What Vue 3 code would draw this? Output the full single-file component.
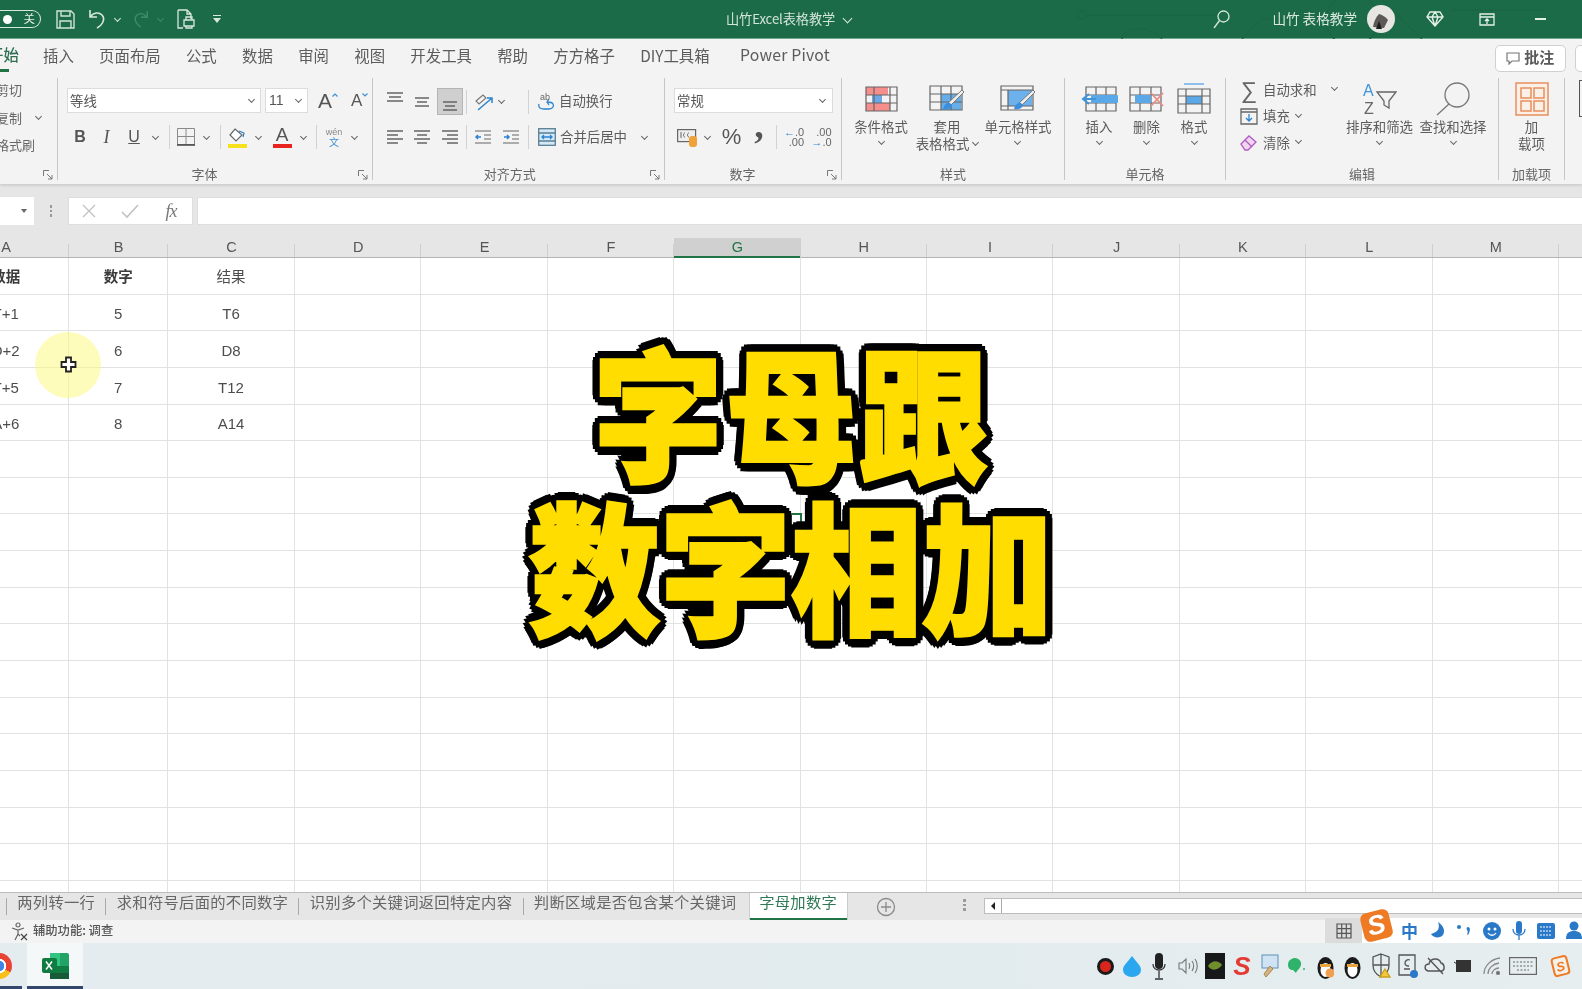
<script setup>
const tabs = ['插入', '页面布局', '公式', '数据', '审阅', '视图', '开发工具', '帮助', '方方格子', 'DIY工具箱']
const colLetters = ['A', 'B', 'C', 'D', 'E', 'F', 'G', 'H', 'I', 'J', 'K', 'L', 'M', 'N']
const data = [
  [['数据', 'b'], ['数字', 'b'], ['结果', 'c']],
  [['T+1', ''], ['5', ''], ['T6', '']],
  [['D+2', ''], ['6', ''], ['D8', '']],
  [['T+5', ''], ['7', ''], ['T12', '']],
  [['A+6', ''], ['8', ''], ['A14', '']]
]
const cells = []
for (let r = 0; r < 18; r++) {
  for (let c = 0; c < 14; c++) {
    const d = data[r] && data[r][c]
    cells.push({ id: r + '-' + c, text: d ? d[0] : '', cls: { bold: d && d[1] === 'b', cjk: d && d[1] === 'c', sel: r === 7 && c === 6 } })
  }
}
const sheets = ['两列转一行', '求和符号后面的不同数字', '识别多个关键词返回特定内容', '判断区域是否包含某个关键词']
const L = {
  top: 'M0 1h16M2 5h12M0 9h16',
  mid: 'M1 6h14M3 10h10M1 14h14',
  bot: 'M1 10h14M3 14h10M1 18h14',
  left: 'M0 1h16M0 5h11M0 9h16M0 13h11',
  center: 'M0 1h16M3 5h10M0 9h16M3 13h10',
  right: 'M0 1h16M5 5h11M0 9h16M5 13h11'
}
</script>

<template>
  <div class="app">
    <header class="title">
      <svg class="circuit" width="560" height="39" viewBox="0 0 560 39" fill="none" stroke="#1a6745" stroke-width="1.5">
        <circle cx="60" cy="15" r="4" /><path d="M64 15h130M100 39c0-12 30-14 40 0M220 39l20-20h60" /><circle cx="330" cy="20" r="26" /><path d="M360 0l40 39M430 10h90" />
      </svg>
      <div class="qat">
        <div class="toggle"><i></i><span>关</span></div>
        <svg width="19" height="19" viewBox="0 0 19 19" fill="none" stroke="#cfe3d8" stroke-width="1.4"><path d="M1 1h14l3 3v14H1zM5 1v5h9V1M4 18v-7h11v7" /></svg>
        <svg width="18" height="20" viewBox="0 0 18 20" fill="none" stroke="#d7e8de" stroke-width="1.6"><path d="M2 1v7h7M2 8c4-5 9-5 12-2s2 9-5 13" /></svg>
        <b class="chev pale"></b>
        <svg width="16" height="18" viewBox="0 0 18 20" fill="none" stroke="#3f8b68" stroke-width="1.6"><path d="M16 1v7H9M16 8C12 3 7 3 4 6s-2 9 5 13" /></svg>
        <b class="chev dim"></b>
        <svg width="18" height="20" viewBox="0 0 18 20" fill="none" stroke="#d7e8de" stroke-width="1.3"><path d="M1 1h9l4 4v5M10 1v4h4M1 1v18h5" /><path d="M7 11h10v6H7zM9 11V8h6v3M9 17v2h6v-2" /></svg>
        <svg class="cust" width="8" height="8" viewBox="0 0 8 8" fill="#d7e8de"><path d="M0 0h8v1H0zM0 3h8L4 8z" /></svg>
      </div>
      <div class="doc">山竹Excel表格教学 <b class="chev pale big"></b></div>
      <div class="win">
        <svg width="17" height="19" viewBox="0 0 17 19" fill="none" stroke="#d7e8de" stroke-width="1.3"><circle cx="10.5" cy="6.5" r="5.5" /><path d="M6.5 10.5L1 18" /></svg>
        <span class="user">山竹 表格教学</span>
        <div class="avatar"><svg width="28" height="28" viewBox="0 0 28 28"><path d="M6 22c1-6 3-10 6-13 3 1 6 2 9 6l-4 8z" fill="#5d5a56" /><path d="M9 24l3-8 3 8z" fill="#1d1d1d" /></svg></div>
        <svg width="18" height="16" viewBox="0 0 18 16" fill="none" stroke="#e4f0e9" stroke-width="1.4"><path d="M4 1h10l3 5-8 9-8-9zM1 6h16M6 6l3 9 3-9M6 6l3-5 3 5" /></svg>
        <svg width="16" height="13" viewBox="0 0 16 13" fill="none" stroke="#e4f0e9" stroke-width="1.3"><path d="M1 1h14v11H1zM1 4h14M8 11V6M6 8l2-2 2 2" /></svg>
        <i class="minimize"></i>
      </div>
    </header>

    <nav class="tabs">
      <span class="tab active">开始</span>
      <span v-for="t in tabs" :key="t" class="tab">{{ t }}</span>
      <span class="tab pivot">Power Pivot</span>
      <button class="comment">
        <svg width="14" height="13" viewBox="0 0 14 13" fill="none" stroke="#777" stroke-width="1.2"><path d="M1 1h12v8H6l-3 3V9H1z" /></svg>
        <span>批注</span>
      </button>
      <button class="share"></button>
    </nav>

    <section class="ribbon">
      <div class="group g-clip">
        <div class="clip-col">
          <div class="clip-row"><span>剪切</span></div>
          <div class="clip-row"><span>复制</span><b class="chev clip-chev"></b></div>
          <div class="clip-row"><span>格式刷</span></div>
        </div>
        <div class="glabel"></div>
        <svg class="launch" width="10" height="10" viewBox="0 0 10 10" fill="none" stroke="#777"><path d="M.5 6V.5H6M4 4l5 5M9 5v4H5" /></svg>
      </div>

      <div class="group g-font">
        <div class="body">
          <div class="r1 font-r1">
            <div class="combo c-font"><span>等线</span><b class="chev"></b></div>
            <div class="combo c-size"><span>11</span><b class="chev"></b></div>
            <span class="grow-a">A<svg width="6" height="4" viewBox="0 0 6 4" fill="none" stroke="#3f8fd2" stroke-width="1.2"><path d="M.5 3.5L3 1l2.5 2.5" /></svg></span>
            <span class="shrink-a">A<svg width="6" height="4" viewBox="0 0 6 4" fill="none" stroke="#3f8fd2" stroke-width="1.2"><path d="M.5.5L3 3 5.500.5" /></svg></span>
          </div>
          <div class="r2 font-r2">
            <span class="fmt b">B</span><span class="fmt i">I</span><span class="fmt u">U</span><b class="chev"></b><i class="vsep"></i>
            <svg width="18" height="18" viewBox="0 0 18 18" fill="none" stroke="#8a8a8a"><path d="M.5.5h17v16H.5zM9 .5v16M.5 8.500h17" /><path d="M0 17h18" stroke="#444" stroke-width="1.5" /></svg>
            <b class="chev"></b><i class="vsep"></i>
            <svg width="20" height="21" viewBox="0 0 20 21"><path d="M7 2l7 6-6 6-6-6z" fill="#fff" stroke="#666" stroke-width="1.2" /><path d="M11 4l5 2-1 4" fill="none" stroke="#2b7cc0" stroke-width="1.2" /><rect y="17" width="19" height="4" fill="#f7e11a" /></svg>
            <b class="chev"></b>
            <span class="fcolor">A<i></i></span>
            <b class="chev"></b><i class="vsep"></i>
            <span class="wen"><em>wén</em><small>文</small></span>
            <b class="chev"></b>
          </div>
        </div>
        <div class="glabel">字体</div>
        <svg class="launch" width="10" height="10" viewBox="0 0 10 10" fill="none" stroke="#777"><path d="M.5 6V.5H6M4 4l5 5M9 5v4H5" /></svg>
      </div>

      <div class="group g-align">
        <div class="body">
          <div class="r1 align-r1">
            <svg width="16" height="20" viewBox="0 0 16 20" fill="none" stroke="#666" stroke-width="1.3"><path :d="L.top" /></svg>
            <svg width="16" height="20" viewBox="0 0 16 20" fill="none" stroke="#666" stroke-width="1.3"><path :d="L.mid" /></svg>
            <span class="on"><svg width="16" height="20" viewBox="0 0 16 20" fill="none" stroke="#666" stroke-width="1.3"><path :d="L.bot" /></svg></span>
            <i class="vsep"></i>
            <svg width="19" height="18" viewBox="0 0 19 18" fill="none" stroke="#777" stroke-width="1.1"><path d="M1 8l7-6 3 3-7 6z" /><path d="M3 17L17 5M12 5h5v5" stroke="#2b84cf" stroke-width="1.5" /></svg>
            <b class="chev"></b><span></span><i class="vsep"></i>
            <div class="inline wrap-btn">
              <svg width="17" height="19" viewBox="0 0 17 19" fill="none" stroke="#2b84cf" stroke-width="1.3"><path d="M1 12c-1 4 2 5 5 5h5c4 0 5-3 4-5s-3-2-6-2M11 7l-2 3 2 3" /><text x="2" y="8" font-size="9" fill="#666" stroke="none" font-family="Liberation Sans">ab</text></svg>
              <span class="lift">自动换行</span>
            </div>
          </div>
          <div class="r2 align-r2">
            <svg width="16" height="14" viewBox="0 0 16 14" fill="none" stroke="#666" stroke-width="1.3"><path :d="L.left" /></svg>
            <svg width="16" height="14" viewBox="0 0 16 14" fill="none" stroke="#666" stroke-width="1.3"><path :d="L.center" /></svg>
            <svg width="16" height="14" viewBox="0 0 16 14" fill="none" stroke="#666" stroke-width="1.3"><path :d="L.right" /></svg>
            <i class="vsep"></i>
            <svg width="16" height="14" viewBox="0 0 16 14" fill="none" stroke="#666" stroke-width="1.2"><path d="M0 1h16M9 5h7M9 9h7M0 13h16" /><path d="M6 7H1M3 5L1 7l2 2" stroke="#2b84cf" stroke-width="1.5" /></svg>
            <svg width="16" height="14" viewBox="0 0 16 14" fill="none" stroke="#666" stroke-width="1.2"><path d="M0 1h16M9 5h7M9 9h7M0 13h16" /><path d="M1 7h5M4 5l2 2-2 2" stroke="#2b84cf" stroke-width="1.5" /></svg>
            <i class="vsep"></i>
            <div class="inline merge-btn">
              <svg width="18" height="18" viewBox="0 0 18 18" fill="#d4e8f8" stroke="#5a7f92" stroke-width="1.3"><rect x=".7" y=".7" width="16.600" height="16.600" /><path d="M.7 5h16.600M.7 13h16.600" fill="none" /><path d="M4 9h10M6 7L4 9l2 2M12 7l2 2-2 2" fill="none" stroke="#2b84cf" /></svg>
              <span class="lift1">合并后居中</span><b class="chev merge-chev"></b>
            </div>
          </div>
        </div>
        <div class="glabel">对齐方式</div>
        <svg class="launch" width="10" height="10" viewBox="0 0 10 10" fill="none" stroke="#777"><path d="M.5 6V.5H6M4 4l5 5M9 5v4H5" /></svg>
      </div>

      <div class="group g-num">
        <div class="body">
          <div class="r1"><div class="combo c-num"><span>常规</span><b class="chev"></b></div></div>
          <div class="r2 num-r2">
            <svg width="20" height="19" viewBox="0 0 20 19"><rect x=".6" y="1.600" width="18" height="12" fill="#eee" stroke="#666" stroke-width="1.2" /><path d="M4 4v6M8 5c-2 0-2 4 0 4M12 5c-2 0-2 4 0 4" fill="none" stroke="#666" /><rect x="12" y="8" width="8" height="11" rx="3" fill="#f0a23a" /></svg>
            <b class="chev"></b>
            <span class="pct">%</span>
            <span class="comma">,</span>
            <i class="vsep"></i>
            <span class="dec"><em><b class="arr">←</b>.0</em><em>.00</em></span>
            <span class="dec"><em>.00</em><em><b class="arr">→</b>.0</em></span>
          </div>
        </div>
        <div class="glabel">数字</div>
        <svg class="launch" width="10" height="10" viewBox="0 0 10 10" fill="none" stroke="#777"><path d="M.5 6V.5H6M4 4l5 5M9 5v4H5" /></svg>
      </div>

      <div class="group g-style">
        <div class="body big-grid">
          <div class="big">
            <div class="big-icon">
              <svg width="33" height="26" viewBox="0 0 33 26"><rect x="1" y="1" width="22" height="8" fill="#f68f8c" /><rect x="7" y="9" width="10" height="8" fill="#6aa9e6" /><rect x="1" y="17" width="24" height="8" fill="#f68f8c" /><path d="M1 1h31v24H1zM1 9h31M1 17h31M9 1v24M25 1v24" fill="none" stroke="#666" stroke-width="1.2" /></svg>
            </div>
            <span>条件格式</span><b class="chev"></b>
          </div>
          <div class="big">
            <div class="big-icon">
              <svg width="36" height="28" viewBox="0 0 36 28"><rect x="12" y="9" width="20" height="16" fill="#65aeea" /><path d="M1 1h32v24H1zM1 9h32M1 17h32M12 1v24M22 1v24" fill="none" stroke="#666" stroke-width="1.2" /><path d="M35 7L22 20l-3-2L33 5z" fill="#eee" stroke="#777" /><path d="M21 18c-3-1-6 2-7 6 4 1 8 0 9-4z" fill="#3b8edc" /></svg>
            </div>
            <span>套用</span><span class="nowrap">表格格式 <b class="chev"></b></span>
          </div>
          <div class="big">
            <div class="big-icon">
              <svg width="36" height="28" viewBox="0 0 36 28"><rect x="8" y="5" width="24" height="16" fill="#6cb0ec" /><path d="M1 1h32v24H1zM1 5h32M8 5v20M1 21h32" fill="none" stroke="#666" stroke-width="1.2" /><path d="M35 7L22 20l-3-2L33 5z" fill="#eee" stroke="#777" /><path d="M21 18c-3-1-6 2-7 6 4 1 8 0 9-4z" fill="#3b8edc" /></svg>
            </div>
            <span class="nowrap">单元格样式</span><b class="chev"></b>
          </div>
        </div>
        <div class="glabel">样式</div>
      </div>

      <div class="group g-cell">
        <div class="body big-row">
          <div class="big cellbtn">
            <div class="big-icon">
              <svg width="37" height="26" viewBox="0 0 37 26"><path d="M5 1h30v24H5zM5 9h30M5 17h30M15 1v24M25 1v24" fill="none" stroke="#666" stroke-width="1.2" /><rect x="10" y="9" width="27" height="8" rx="1" fill="#5aa8e8" /><path d="M15 13H2M8 8l-6 5 6 5" fill="none" stroke="#3f95dc" stroke-width="2" /></svg>
            </div>
            <span>插入</span><b class="chev"></b>
          </div>
          <div class="big cellbtn">
            <div class="big-icon">
              <svg width="36" height="26" viewBox="0 0 36 26"><path d="M1 1h31v24H1zM1 9h31M1 17h31M11 1v24M22 1v24" fill="none" stroke="#666" stroke-width="1.2" /><rect x="6" y="9" width="16" height="8" fill="#5aa8e8" /><path d="M22 7l12 13M34 7L22 20" stroke="#ec8c85" stroke-width="1.8" /></svg>
            </div>
            <span>删除</span><b class="chev"></b>
          </div>
          <div class="big cellbtn">
            <div class="big-icon">
              <svg width="34" height="32" viewBox="0 0 34 32"><path d="M7 1h20" stroke="#6aaee8" stroke-width="1.500" /><rect x="9" y="13" width="16" height="8" fill="#5aa8e8" /><path d="M1 6h32v24H1zM1 13h32M1 21h32M9 6v24M25 6v24" fill="none" stroke="#666" stroke-width="1.2" /></svg>
            </div>
            <span>格式</span><b class="chev"></b>
          </div>
        </div>
        <div class="glabel">单元格</div>
      </div>

      <div class="group g-edit">
        <div class="body edit-row">
          <div class="edit-col">
            <div class="edit-line">
              <span class="sigma">∑</span><span class="t">自动求和</span><b class="chev sum-chev"></b>
            </div>
            <div class="edit-line">
              <svg class="ic" width="18" height="17" viewBox="0 0 18 17" fill="none" stroke="#666" stroke-width="1.300"><path d="M1 1h16v15H1zM1 4h16" /><path d="M9 6v7M6 10l3 3 3-3" stroke="#2b84cf" /></svg>
              <span class="t">填充</span><b class="chev"></b>
            </div>
            <div class="edit-line">
              <svg class="ic" width="18" height="18" viewBox="0 0 18 18" fill="#f0d6f0" stroke="#b05cc0" stroke-width="1.300"><path d="M1 10l8-8 7 6-8 8h-3z" /><path d="M5 6l7 7" fill="none" /></svg>
              <span class="t">清除</span><b class="chev"></b>
            </div>
          </div>
          <div class="big sortbtn">
            <div class="big-icon">
              <svg width="34" height="33" viewBox="0 0 34 33" fill="none"><text x="0" y="14" font-size="16" fill="#3f95dc" font-family="Liberation Sans">A</text><text x="1" y="32" font-size="16" fill="#666" font-family="Liberation Sans">Z</text><path d="M14 10h19l-7 9v7l-5-3v-4z" stroke="#666" stroke-width="1.3" /></svg>
            </div>
            <span class="nowrap">排序和筛选</span><b class="chev"></b>
          </div>
          <div class="big findbtn">
            <div class="big-icon">
              <svg width="34" height="34" viewBox="0 0 34 34" fill="none" stroke="#777" stroke-width="1.3"><circle cx="21" cy="13" r="12" /><path d="M13 22L1 33" /></svg>
            </div>
            <span class="nowrap">查找和选择</span><b class="chev"></b>
          </div>
        </div>
        <div class="glabel">编辑</div>
      </div>

      <div class="group g-add">
        <div class="body addin">
          <div class="big">
            <div class="big-icon">
              <svg width="34" height="34" viewBox="0 0 34 34" fill="#fbf0e8" stroke="#e88f5d" stroke-width="1.500"><rect x="1" y="1" width="32" height="32" /><rect x="6" y="6" width="10" height="10" /><rect x="19" y="6" width="10" height="10" /><rect x="6" y="19" width="10" height="10" /><rect x="19" y="19" width="10" height="10" /></svg>
            </div>
            <span>加</span><span>载项</span>
          </div>
        </div>
        <div class="glabel">加载项</div>
      </div>
      <div class="g-last"><i></i></div>
    </section>

    <section class="formula">
      <div class="namebox"><b class="tri"></b></div>
      <div class="dots"><i></i><i></i><i></i></div>
      <div class="fx-box">
        <svg width="16" height="16" viewBox="0 0 16 16" fill="none" stroke="#c2c2c2" stroke-width="1.300"><path d="M2 2l12 12M14 2L2 14" /></svg>
        <svg width="18" height="16" viewBox="0 0 18 16" fill="none" stroke="#c2c2c2" stroke-width="1.600"><path d="M1 9l5 5L17 2" /></svg>
        <span class="fx">fx</span>
      </div>
      <div class="finput"></div>
    </section>

    <section class="sheet">
      <div class="colhead">
        <div v-for="c in colLetters" :key="c" class="ch" :class="{ cur: c === 'G' }">{{ c }}</div>
      </div>
      <div class="grid">
        <div v-for="cell in cells" :key="cell.id" class="cell" :class="cell.cls">{{ cell.text }}</div>
      </div>
      <div class="pointer">
        <svg width="17" height="17" viewBox="0 0 17 17"><path d="M6 1.500h5v4.500h4.500v5H11v4.500H6V11H1.500V6H6z" fill="#fff" stroke="#222" stroke-width="1.800" /></svg>
      </div>
      <div class="banner">
        <div class="line one">字<span class="upright">母</span>跟</div>
        <div class="line two">数字相加</div>
      </div>
    </section>

    <section class="sheettabs">
      <div class="stab-list">
        <template v-for="s in sheets" :key="s"><i class="ssep"></i><span class="stab">{{ s }}</span></template>
        <span class="stab active">字母加数字</span>
      </div>
      <svg class="addsheet" width="20" height="20" viewBox="0 0 20 20" fill="none" stroke="#8a8a8a" stroke-width="1.300"><circle cx="10" cy="10" r="8.500" /><path d="M10 5v10M5 10h10" /></svg>
      <div class="dots sdots"><i></i><i></i><i></i></div>
      <div class="scroll"><span class="sarrow"><b></b></span><span class="strack"></span></div>
    </section>

    <section class="status">
      <svg class="acc" width="18" height="19" viewBox="0 0 18 19" fill="none" stroke="#666" stroke-width="1.200"><circle cx="7" cy="3" r="2" /><path d="M1 6l6 2 6-2M7 8v4l-3 6M7 12l2 2" /><path d="M10 12l6 6M16 12l-6 6" stroke="#444" /></svg>
      <span class="acc-text">辅助功能: 调查</span>
      <div class="ime">
        <div class="ime-grid"><svg width="16" height="16" viewBox="0 0 16 16" fill="none" stroke="#555" stroke-width="1.200"><path d="M1 1h14v14H1zM1 5.700h14M1 10.300h14M5.700 1v14M10.300 1v14" /></svg></div>
        <div class="ime-bar">
          <span class="zh">中</span>
          <svg width="16" height="17" viewBox="0 0 16 17" fill="#2a78c8"><path d="M9 0c2 5 1 10-7 12 3 5 13 5 13-3 0-4-3-7-6-9z" /></svg>
          <svg width="16" height="14" viewBox="0 0 16 14" fill="#2a78c8"><circle cx="3" cy="3" r="2" /><path d="M12 3c2 0 3 3 0 8l-1-1c1-1 1-3 0-4-1-2 0-3 1-3z" /></svg>
          <svg width="18" height="18" viewBox="0 0 18 18"><circle cx="9" cy="9" r="9" fill="#2a78c8" /><circle cx="6" cy="7" r="1.500" fill="#fff" /><circle cx="12" cy="7" r="1.500" fill="#fff" /><path d="M5 11c2 3 6 3 8 0" stroke="#fff" fill="none" stroke-width="1.300" /></svg>
          <svg width="14" height="20" viewBox="0 0 14 20" fill="#2a78c8"><rect x="4" width="6" height="13" rx="3" /><path d="M1 8c0 8 12 8 12 0M7 14v5" fill="none" stroke="#2a78c8" stroke-width="1.300" /></svg>
          <svg width="18" height="16" viewBox="0 0 18 16"><rect width="18" height="16" rx="2" fill="#2a78c8" /><path d="M3 4h12M3 8h12M3 12h12" stroke="#fff" stroke-dasharray="2 1" /></svg>
          <svg width="18" height="20" viewBox="0 0 18 20" fill="#2a78c8"><circle cx="8" cy="5" r="4.500" /><path d="M0 18c0-6 3-8 8-8s8 2 8 8z" /></svg>
        </div>
        <span class="sogou"><em>S</em></span>
      </div>
    </section>

    <footer class="taskbar">
      <div class="task chrome"><i class="chrome-ic"></i></div>
      <div class="task excel">
        <svg width="27" height="26" viewBox="0 0 27 26"><path d="M8 0h17a2 2 0 0 1 2 2v22a2 2 0 0 1-2 2H8z" fill="#21a366" /><rect x="8" y="0" width="10" height="13" fill="#33c481" /><rect x="8" y="13" width="19" height="7" fill="#107c41" /><rect x="8" y="20" width="19" height="6" fill="#185c37" /><rect y="5" width="15" height="15" rx="2" fill="#107c41" /><path d="M4 8.500l6 8M10 8.500l-6 8" stroke="#fff" stroke-width="1.500" /></svg>
      </div>
      <div class="tray">
        <i class="rec"></i>
        <svg width="20" height="22" viewBox="0 0 20 22"><path d="M10 1c4 6 9 9 9 14a9 7 0 0 1-18 0C1 10 6 7 10 1z" fill="#2aa7ee" /></svg>
        <svg width="14" height="27" viewBox="0 0 14 27" fill="#222"><rect x="3" width="8" height="16" rx="4" /><path d="M1 11c0 8 12 8 12 0M7 18v7M3 26h8" fill="none" stroke="#333" stroke-width="1.300" /></svg>
        <svg width="20" height="20" viewBox="0 0 20 20" fill="none" stroke="#777" stroke-width="1.100"><path d="M1 7h3l4-4v14l-4-4H1zM11 7c1 2 1 4 0 6M14 5c2 3 2 7 0 10M17 3c3 4 3 10 0 14" /></svg>
        <svg width="20" height="26" viewBox="0 0 20 26"><rect width="20" height="26" fill="#16181a" /><path d="M3 13c4-6 10-6 14-1-4 5-10 7-14 1z" fill="#6f8f2d" /></svg>
        <span class="reds">S</span>
        <svg width="18" height="24" viewBox="0 0 18 24" fill="#cfe3f5" stroke="#5f8fb8"><rect x="1" y="1" width="16" height="13" /><path d="M3 20l6-8 3 3-7 8z" fill="#d7b27f" stroke="#a58755" /></svg>
        <svg width="18" height="18" viewBox="0 0 18 18" fill="#2fb36b"><path d="M1 8c0-5 4-7 7-7s7 3 6 7-4 5-5 8l-3-3c-3 0-5-2-5-5z" /><circle cx="17" cy="12" r="1" /></svg>
        <svg class="qq" width="17" height="26" viewBox="0 0 17 26"><ellipse cx="8.500" cy="15" rx="8" ry="11" fill="#1a1a1a" /><ellipse cx="8.500" cy="17" rx="5" ry="7" fill="#fff" /><rect x="3" y="11" width="11" height="3" fill="#e8a33a" /><circle cx="13" cy="20" r="4.500" fill="#f0a050" /></svg>
        <svg class="qq" width="17" height="26" viewBox="0 0 17 26"><ellipse cx="8.500" cy="15" rx="8" ry="11" fill="#1a1a1a" /><ellipse cx="8.500" cy="17" rx="5" ry="7" fill="#fff" /><rect x="3" y="11" width="11" height="3" fill="#e8a33a" /></svg>
        <svg width="20" height="26" viewBox="0 0 20 26" fill="none" stroke="#555" stroke-width="1.300"><path d="M10 1l8 3v8c0 6-4 10-8 12-4-2-8-6-8-12V4zM10 1v23M2 12h16" /><path d="M14 16l5 8h-10z" fill="#f5c93a" stroke="#c9a020" /></svg>
        <svg width="20" height="26" viewBox="0 0 20 26" fill="none" stroke="#555" stroke-width="1.300"><path d="M1 2h16v20H1z" /><path d="M12 7c-3-1-5 1-5 3s2 3 4 3M6 16h6" /><circle cx="16" cy="21" r="4" fill="#2a78c8" stroke="none" /></svg>
        <svg width="22" height="20" viewBox="0 0 22 20" fill="none" stroke="#555" stroke-width="1.400"><path d="M4 15c-4-1-4-7 1-7 1-6 10-7 12-1 4 1 4 7 1 8zM4 2l15 16" /></svg>
        <svg width="18" height="14" viewBox="0 0 18 14"><rect x="2" y="1" width="15" height="12" fill="#333" /><path d="M0 3l3 2v5" stroke="#333" fill="none" /></svg>
        <svg width="18" height="18" viewBox="0 0 18 18" fill="none" stroke="#888" stroke-width="1.300"><path d="M1 17C1 9 8 2 17 1M5 17c0-6 5-10 11-11M9 17c0-3 3-6 7-6" /><circle cx="15" cy="16" r="1.500" fill="#555" /></svg>
        <svg width="28" height="18" viewBox="0 0 28 18" fill="none" stroke="#666" stroke-width="1.200"><rect x=".6" y=".6" width="26.800" height="16.800" /><path d="M4 5h20M4 9h20M8 13h12" stroke-dasharray="2 1.500" /></svg>
        <span class="sogou small"><em>S</em></span>
      </div>
    </footer>
  </div>
</template>

<style>
html, body { margin: 0; padding: 0; background: #fff; }
</style>

<style scoped>
* { box-sizing: border-box; }
.app {
  width: 1582px; height: 989px; overflow: hidden; display: flex; flex-direction: column;
  font-family: "Noto Sans CJK SC", "Liberation Sans", sans-serif; color: #555; background: #fff;
  filter: blur(.55px); position: relative;
}
i, em, b { font-style: normal; font-weight: normal; display: block; }
.chev { width: 5px; height: 5px; border-right: 1.300px solid #666; border-bottom: 1.300px solid #666; transform: rotate(45deg); margin: -2px 0 0; flex: none; }
.chev.pale { border-color: #d7e8de; }
.chev.dim { border-color: #3f8b68; }
.chev.big { width: 7px; height: 7px; margin: -3px 0 0 6px; display: inline-block; vertical-align: middle; }

/* title */
.title { height: 39px; flex: none; background: #1c6b48; border-bottom: 1px solid #6fa78b; display: grid; grid-template-columns: 726px auto 1fr; align-items: center; position: relative; }
.circuit { position: absolute; right: 0; top: 0; }
.qat { display: flex; align-items: center; height: 38px; }
.qat > :nth-child(2) { margin-left: 15px; }
.qat > :nth-child(3) { margin-left: 13px; }
.qat > :nth-child(4) { margin-left: 9px; }
.qat > :nth-child(5) { margin-left: 13px; }
.qat > :nth-child(6) { margin-left: 9px; }
.qat > :nth-child(7) { margin-left: 14px; }
.qat > :nth-child(8) { margin-left: 18px; }
.toggle { width: 41px; height: 18px; border: 1.300px solid #d7e8de; border-left: 0; border-radius: 0 10px 10px 0; display: flex; align-items: center; justify-content: space-between; padding: 0 5px 0 3px; }
.toggle i { width: 9px; height: 9px; border-radius: 50%; background: #fff; }
.toggle span { font-size: 11.500px; color: #e4f0e9; line-height: 1; }
.doc { font-size: 13.2px; color: #d3e4da; letter-spacing: -.1px; white-space: nowrap; margin-top: -2px; }
.win { display: flex; align-items: center; justify-content: flex-end; padding-right: 36px; position: relative; }
.user { font-size: 13.6px; color: #d9e8df; margin-left: 42px; white-space: nowrap; margin-top: -2px; }
.avatar { width: 28px; height: 28px; border-radius: 50%; background: #e8e6e2; margin-left: 10px; overflow: hidden; }
.win > :nth-child(4) { margin-left: 31px; }
.win > :nth-child(5) { margin-left: 35px; }
.minimize { width: 11px; height: 1.500px; background: #e4f0e9; margin-left: 40px; }

/* tabs */
.tabs { height: 39px; flex: none; background: #f3f3f3; display: flex; align-items: center; padding-left: 43px; gap: 25.300px; position: relative; }
.tab { font-size: 15.400px; line-height: 34px; color: #5c5c5c; white-space: nowrap; margin-top: -8px; }
.tab.active { position: absolute; left: -12px; top: 0; height: 33px; margin: 0; line-height: 30px; color: #2f6f50; font-weight: 500; }
.tab.active::after { content: ""; position: absolute; left: 0; right: 10px; bottom: 0; height: 3px; background: #217346; }
.tab.pivot { margin-left: 5px; font-size: 15.800px; letter-spacing: .2px; }
.comment { margin-left: auto; width: 71px; height: 27px; margin-top: 0; background: #fff; border: 1px solid #d0d0d0; border-radius: 5px; display: flex; align-items: center; justify-content: center; gap: 4px; font: 700 15px "Noto Sans CJK SC", sans-serif; color: #5a5a5a; padding: 0; }
.comment span { margin-top: -5px; }
.share { width: 18px; height: 27px; background: #fff; border: 1px solid #d0d0d0; border-radius: 5px; margin-left: -16px; margin-right: -11px; flex: none; }

/* ribbon */
.ribbon { height: 106px; flex: none; background: #f3f3f3; display: flex; align-items: flex-start; overflow: hidden; box-shadow: 0 2px 2px #cfcfcf; position: relative; z-index: 1; font-size: 13.400px; }
.group { height: 102px; flex: none; position: relative; display: flex; flex-direction: column; border-right: 1.500px solid #c6c6c6; }
.body { flex: 1; min-height: 0; padding-top: 10px; }
.glabel { height: 14px; line-height: 14px; font-size: 13px; text-align: center; color: #666; margin-bottom: -1px; white-space: nowrap; }
.launch { position: absolute; right: 4px; bottom: 0; }
.r1 { height: 25px; display: flex; align-items: center; }
.r2 { height: 26px; margin-top: 11px; display: grid; align-items: center; justify-items: center; }
.vsep { width: 1px; height: 24px; background: #d2d2d2; }
.nowrap { white-space: nowrap; display: inline-flex; align-items: center; gap: 4px; }
.inline { display: flex; align-items: center; justify-self: start; white-space: nowrap; font-size: 13.400px; color: #5c5c5c; }
.lift { margin-top: -3px; }
.lift1 { margin-top: -2px; }

.g-clip { width: 58px; }
.clip-col { height: 88px; position: relative; margin-top: -2px; }
.clip-row { height: 27.500px; display: flex; align-items: center; position: relative; font-size: 13px; color: #666; justify-content: flex-end; width: 22px; white-space: nowrap; }
.clip-row:nth-child(3) { width: 35px; }
.clip-chev { position: absolute; left: 36px; }
.g-clip .glabel { margin-top: auto; }

.g-font { width: 315px; padding-left: 9px; }
.g-font .glabel { padding-right: 30px; }
.font-r1 { gap: 4px; }
.combo { height: 25px; background: #fff; border: 1px solid #dcdcdc; display: flex; align-items: center; justify-content: space-between; padding: 0 6px 0 2px; font-size: 13.400px; color: #555; }
.combo span { margin-top: -2px; }
.c-font { width: 194px; }
.c-size { width: 43px; font-family: "Liberation Sans", sans-serif; font-size: 14px; padding-left: 3px; }
.grow-a { margin-left: 6px; font: 21px "Liberation Sans", sans-serif; color: #555; display: flex; align-items: flex-start; line-height: 25px; width: 19px; }
.shrink-a { margin-left: 10px; font: 17px "Liberation Sans", sans-serif; color: #555; display: flex; align-items: flex-start; line-height: 25px; }
.grow-a svg, .shrink-a svg { margin-top: 5px; flex: none; }
.font-r2 { grid-template-columns: 26px 27px 28px 14px 14px 20px 20px 8px 27px 14px 34px 8px 19px 16px 24px; }
.fmt { font: 16px "Liberation Sans", sans-serif; color: #555; }
.fmt.b { font-weight: 700; }
.fmt.i { font-family: "Liberation Serif", serif; font-style: italic; font-size: 18px; }
.fmt.u { text-decoration: underline; }
.fcolor { position: relative; font: 19px/20px "Liberation Sans", sans-serif; width: 19px; height: 22px; text-align: center; color: #555; margin-top: -2px; }
.fcolor i { position: absolute; left: 0; right: 0; bottom: -1px; height: 4px; background: #e8241f; }
.wen { display: flex; flex-direction: column; align-items: center; line-height: 9px; white-space: nowrap; }
.wen em { font: 9px/10px "Liberation Sans", sans-serif; color: #888; }
.wen small { font-size: 10px; line-height: 10px; color: #3f8fd2; }

.g-align { width: 292px; padding-left: 8.500px; }
.g-align .glabel { padding-right: 26px; }
.align-r1 { display: grid; grid-template-columns: 27px 27px 28px 6px 29px 6px 19.500px 9px auto; align-items: center; justify-items: center; }
.on { width: 26px; height: 27px; background: #cfcfcf; border: 1px solid #b4b4b4; display: flex; align-items: center; justify-content: center; }
.align-r2 { grid-template-columns: 27px 27px 28px 6px 27.500px 27px 9px auto; }
.wrap-btn, .merge-btn { padding-left: 5px; gap: 4px; }
.merge-chev { margin-left: 11px; }

.g-num { width: 177px; padding-left: 9px; }
.g-num .glabel { padding-right: 30px; }
.c-num { width: 159px; padding-right: 7px; }
.num-r2 { grid-template-columns: 25px 16px 33px 22px 12px 24px 31px; }
.pct { font: 22px/26px "Liberation Sans", sans-serif; color: #555; }
.comma { font: 700 38px/20px "Liberation Serif", serif; color: #555; margin-top: -24px; }
.dec { display: flex; flex-direction: column; align-items: flex-end; font: 11px/10px "Liberation Sans", sans-serif; color: #666; white-space: nowrap; }
.dec em { display: flex; align-items: center; }
.arr { color: #2b84cf; font-size: 11px; line-height: 10px; }

.big { display: flex; flex-direction: column; align-items: center; font-size: 13.400px; line-height: 17px; color: #5c5c5c; white-space: nowrap; }
.big .chev { margin-top: 4px; }
.big .nowrap .chev { margin-top: -2px; }
.big-icon { height: 33px; margin-bottom: 2.500px; display: flex; align-items: center; justify-content: center; }
.g-style { width: 223px; }
.big-grid { display: grid; grid-template-columns: 78px 54px 88px; justify-items: center; padding-top: 4px; }
.g-cell { width: 161px; }
.big-row { display: flex; gap: 11.500px; padding: 4px 0 0 16px; }
.cellbtn { width: 36px; }
.g-edit { width: 273px; }
.edit-row { display: flex; padding: 0 0 0 14px; }
.edit-col { width: 105px; margin-top: -2.500px; }
.edit-line { height: 26.500px; display: flex; align-items: center; position: relative; font-size: 13.400px; color: #5c5c5c; }
.edit-line .t { margin-left: 5px; }
.edit-line .chev { margin-left: 6px; }
.edit-line svg, .sigma { margin-top: 2px; }
.sigma { width: 18px; text-align: center; font: 23px/26px "Liberation Sans", sans-serif; color: #666; }
.sum-chev { margin-left: 15px !important; }
.sortbtn { width: 69px; padding-top: 4px; }
.findbtn { width: 68px; margin-left: 5px; padding-top: 4px; }
.g-add { width: 66px; }
.addin { display: flex; justify-content: center; padding-top: 4px; }
.g-last { padding: 2px 0 0 14px; }
.g-last i { width: 30px; height: 37px; border: 1.500px solid #555; }

/* formula */
.formula { height: 54px; flex: none; background: #e6e6e6; display: flex; padding-top: 13px; align-items: flex-start; }
.namebox { width: 34px; height: 28px; background: #fff; display: flex; align-items: center; justify-content: flex-end; padding-right: 7px; }
.tri { width: 0; height: 0; border-left: 3.500px solid transparent; border-right: 3.500px solid transparent; border-top: 4px solid #666; }
.dots { width: 34px; height: 28px; display: flex; flex-direction: column; align-items: center; justify-content: center; gap: 2px; }
.dots i { width: 2.500px; height: 2.500px; background: #9a9a9a; }
.fx-box { width: 125px; height: 28px; background: #fff; border: 1px solid #dedede; display: grid; grid-template-columns: 40px 42px 40px; align-items: center; justify-items: center; }
.fx { font: italic 18px "Liberation Serif", serif; color: #777; letter-spacing: -1px; }
.finput { flex: 1; height: 28px; margin-left: 4px; background: #fff; border: 1px solid #dedede; border-right: 0; }

/* sheet */
.sheet { height: 654px; flex: none; position: relative; overflow: hidden; }
.colhead, .grid { display: grid; grid-template-columns: 126.400px 98.600px 127px repeat(11, 126.400px); margin-left: -57px; }
.colhead { height: 20px; background: #e6e6e6; border-bottom: 1px solid #b4b4b4; }
.ch { text-align: center; font: 14.500px/18px "Liberation Sans", sans-serif; color: #555; position: relative; }
.ch::after { content: ""; position: absolute; right: 0; top: 6px; bottom: 0; width: 1px; background: #cfcfcf; }
.ch.cur { background: #d0d0d0; box-shadow: inset 0 -2px 0 #217346; margin-bottom: -1px; color: #217346; }
.grid { grid-auto-rows: 36.650px; }
.cell { border-right: 1px solid #e1e3e1; border-bottom: 1px solid #e1e3e1; display: flex; align-items: center; justify-content: center; padding-top: 3px; font: 15px "Liberation Sans", "Noto Sans CJK SC", sans-serif; color: #4d4d4d; white-space: nowrap; overflow: hidden; }
.cell.bold { font: 700 14.500px "Noto Sans CJK SC", sans-serif; color: #3a3a3a; padding-top: 0; }
.cell.cjk { font: 14.500px "Noto Sans CJK SC", sans-serif; padding-top: 0; }
.cell.sel { outline: 2px solid #217346; outline-offset: -1px; }
.pointer { position: absolute; left: 35px; top: 93.500px; width: 66px; height: 66px; border-radius: 50%; background: rgba(253, 250, 130, .55); display: flex; align-items: center; justify-content: center; }
.banner { position: absolute; left: 0; width: 1582px; top: 94px; display: flex; flex-direction: column; align-items: center; pointer-events: none; }
.line {
  font-family: "Noto Sans CJK SC", sans-serif; font-weight: 900; font-size: 132px; line-height: 154px; color: #ffdd00;
  -webkit-text-stroke: 3px #ffdd00; white-space: nowrap;
  text-shadow:
    9px 0 #000, 8.300px 3.400px #000, 6.400px 6.400px #000, 3.400px 8.300px #000,
    0 9px #000, -3.400px 8.300px #000, -6.400px 6.400px #000, -8.300px 3.400px #000,
    -9px 0 #000, -8.300px -3.400px #000, -6.400px -6.400px #000, -3.400px -8.300px #000,
    0 -9px #000, 3.400px -8.300px #000, 6.400px -6.400px #000, 8.300px -3.400px #000,
    5px 0 #000, 3.500px 3.500px #000, 0 5px #000, -3.500px 3.500px #000,
    -5px 0 #000, -3.500px -3.500px #000, 0 -5px #000, 3.500px -3.500px #000;
}
.upright { display: inline-block; transform: skewX(5deg); margin: 0 4px; }
.line.one { transform: scale(.978, 1.095); }
.line.two { transform: scale(.992, 1.087); }

/* sheet tabs */
.sheettabs { height: 28px; flex: none; background: #e6e6e6; border-top: 1px solid #bdbdbd; display: flex; align-items: flex-start; position: relative; }
.stab-list { display: flex; align-items: center; padding-left: 6px; height: 27px; }
.ssep { width: 1px; height: 17px; background: #aaa; }
.stab { font-size: 15.300px; letter-spacing: .28px; color: #666; padding: 0 10.300px; white-space: nowrap; line-height: 17px; height: 27px; }
.stab.active { width: 97px; padding: 0; text-align: center; margin-left: 3px; background: #fff; color: #2f7a55; height: 27px; border-bottom: 2px solid #217346; box-shadow: -1px 0 0 #ccc, 1px 0 0 #ccc; }
.addsheet { margin: 4px 0 0 29px; flex: none; }
.sdots { width: 20px; height: 24px; margin-left: 59px; }
.scroll { position: absolute; left: 984px; right: 0; top: 5px; height: 16px; display: flex; background: #fff; border: 1px solid #bdbdbd; border-right: 0; }
.sarrow { width: 17px; border-right: 1px solid #aaa; display: flex; align-items: center; justify-content: center; }
.sarrow b { width: 0; height: 0; border-top: 4px solid transparent; border-bottom: 4px solid transparent; border-right: 4px solid #222; }
.strack { flex: 1; }

/* status */
.status { height: 23px; flex: none; background: #f3f3f3; display: flex; align-items: center; position: relative; z-index: 2; }
.acc { margin-left: 11px; }
.acc-text { font-size: 12.300px; font-weight: 500; margin: -3px 0 0 4px; color: #555; }
.ime { margin-left: auto; display: flex; height: 25px; margin-top: -2px; position: relative; }
.ime-grid { width: 37px; background: #dcdcdc; display: flex; align-items: center; justify-content: center; }
.ime-bar { width: 222px; background: #fff; padding-left: 39px; display: flex; align-items: center; justify-content: space-between; margin-right: -2px; }
.zh { font-size: 17px; font-weight: 700; color: #2a78c8; line-height: 1; }
.sogou { width: 29px; height: 29px; border-radius: 6px; background: #ef7a24; transform: rotate(-14deg); display: flex; align-items: center; justify-content: center; color: #fff; }
.sogou em { font: italic 700 27px/1 "Liberation Sans", sans-serif; color: #fff; }
.ime .sogou { position: absolute; left: 37px; top: -7px; }
.sogou.small { width: 17px; height: 20px; border-radius: 4px; background: #f4f0ea; border: 2.500px solid #ef7a24; }
.sogou.small em { font-size: 13px; color: #ef7a24; }

/* taskbar */
.taskbar { height: 46px; flex: none; background: linear-gradient(90deg, #e4ecef, #e2ebee 60%, #e6eeef); display: flex; position: relative; }
.task { height: 46px; display: flex; align-items: center; justify-content: center; box-shadow: inset 0 -3px 0 #33466b; overflow: hidden; }
.task.chrome { width: 22px; justify-content: flex-start; }
.chrome-ic { width: 26px; height: 26px; border-radius: 50%; margin-left: -14px; background: radial-gradient(circle, #3f86e8 0 5px, #fff 5.500px 7px, transparent 7.500px), conic-gradient(#e84335 0 33%, #f9c01a 0 66%, #2fa84f 0); flex: none; }
.task.excel { width: 56px; margin-left: 5px; background: #f4f8f9; }
.tray { position: absolute; left: 1095px; top: 0; right: 0; height: 46px; display: grid; grid-template-columns: 20px 34px 20px 38px 16px 38px 18px 34px 24px 30px 28px 26px 28px 28px 30px 32px 42px; align-items: center; justify-items: center; }
.rec { width: 17px; height: 17px; border-radius: 50%; background: #d9261c; border: 3px solid #1a1a1a; }
.reds { font: italic 700 26px/1 "Liberation Sans", sans-serif; color: #e43a34; }
</style>
